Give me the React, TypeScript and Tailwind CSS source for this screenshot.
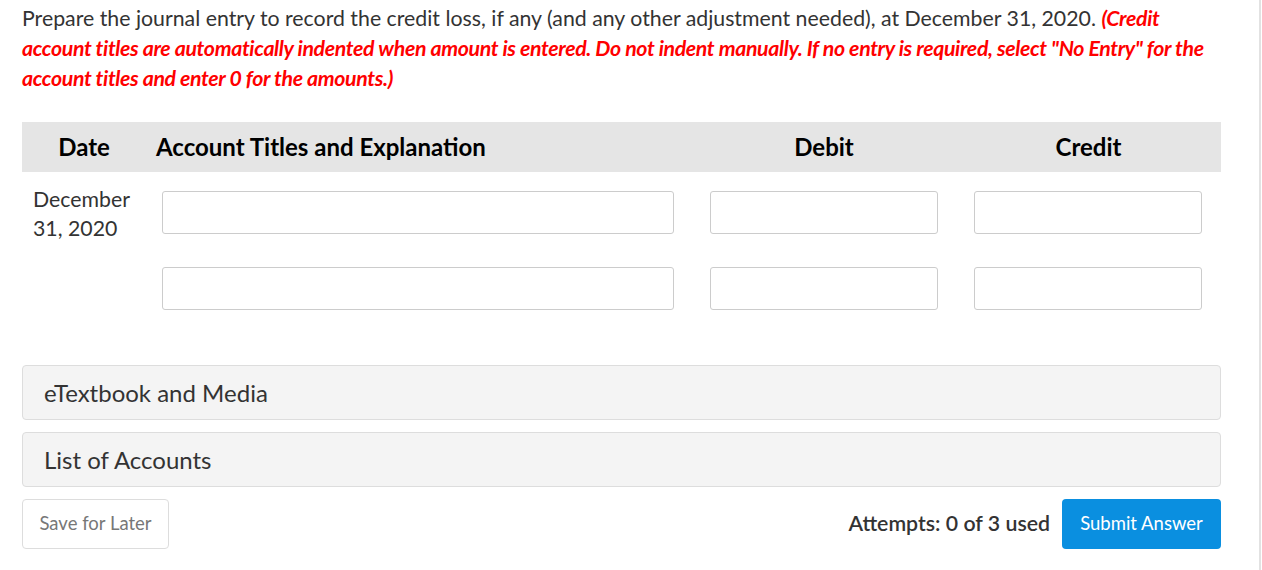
import React from "react";

const Input = ({ w }: { w: string }) => (
  <div className={`${w} h-[43px] border border-[#cccccc] rounded-[3px] bg-white`} />
);

export default function App() {
  return (
    <div className="w-[1262px] h-[570px] bg-white font-['Lato',_sans-serif] text-[#333333] flex">
      <div className="w-[1259px] pl-[22px] pr-[38px] pt-[3px]">
        <p className="text-[21.3px] leading-[30px]">
          Prepare the journal entry to record the credit loss, if any (and any other adjustment needed), at December 31, 2020.{" "}
          <span className="text-[#ff0000] font-bold italic tracking-[-0.35px]">
            (Credit account titles are automatically indented when amount is entered. Do not indent manually. If no entry is required, select "No Entry" for the account titles and enter 0 for the amounts.)
          </span>
        </p>

        <div className="mt-[29px]">
          <div className="grid grid-cols-[124px_546px_264px_265px] h-[50px] bg-[#e5e5e5] items-center text-[24px] font-bold text-black">
            <div className="text-center">Date</div>
            <div className="pl-[10px]">Account Titles and Explanation</div>
            <div className="text-center">Debit</div>
            <div className="text-center">Credit</div>
          </div>
          <div className="grid grid-cols-[124px_546px_264px_265px] pt-[19px] items-start">
            <div className="h-[43px] pl-[11px] text-[21.3px] leading-[29px] -mt-[6px]">
              December
              <br />
              31, 2020
            </div>
            <div className="pl-[16px]"><Input w="w-[512px]" /></div>
            <div className="pl-[18px]"><Input w="w-[228px]" /></div>
            <div className="pl-[18px]"><Input w="w-[228px]" /></div>
          </div>
          <div className="grid grid-cols-[124px_546px_264px_265px] pt-[33px]">
            <div />
            <div className="pl-[16px]"><Input w="w-[512px]" /></div>
            <div className="pl-[18px]"><Input w="w-[228px]" /></div>
            <div className="pl-[18px]"><Input w="w-[228px]" /></div>
          </div>
        </div>

        <div className="mt-[55px] h-[55px] bg-[#f4f4f4] border border-[#dddddd] rounded-[4px] flex items-center pl-[21px] text-[24px]">
          eTextbook and Media
        </div>
        <div className="mt-[12px] h-[55px] bg-[#f4f4f4] border border-[#dddddd] rounded-[4px] flex items-center pl-[21px] text-[24px]">
          List of Accounts
        </div>

        <div className="mt-[12px] flex items-center">
          <button className="w-[147px] h-[50px] border border-[#dddddd] rounded-[4px] bg-white text-[18.5px] text-[#777777]">
            Save for Later
          </button>
          <div className="ml-auto text-[21.3px] font-semibold text-[#333333] mr-[12px]">Attempts: 0 of 3 used</div>
          <button className="w-[159px] h-[50px] rounded-[4px] bg-[#0a8fe0] text-white text-[18.5px]">
            Submit Answer
          </button>
        </div>
      </div>
      <div className="w-[2px] h-full bg-[#e2e2e2]" />
    </div>
  );
}
